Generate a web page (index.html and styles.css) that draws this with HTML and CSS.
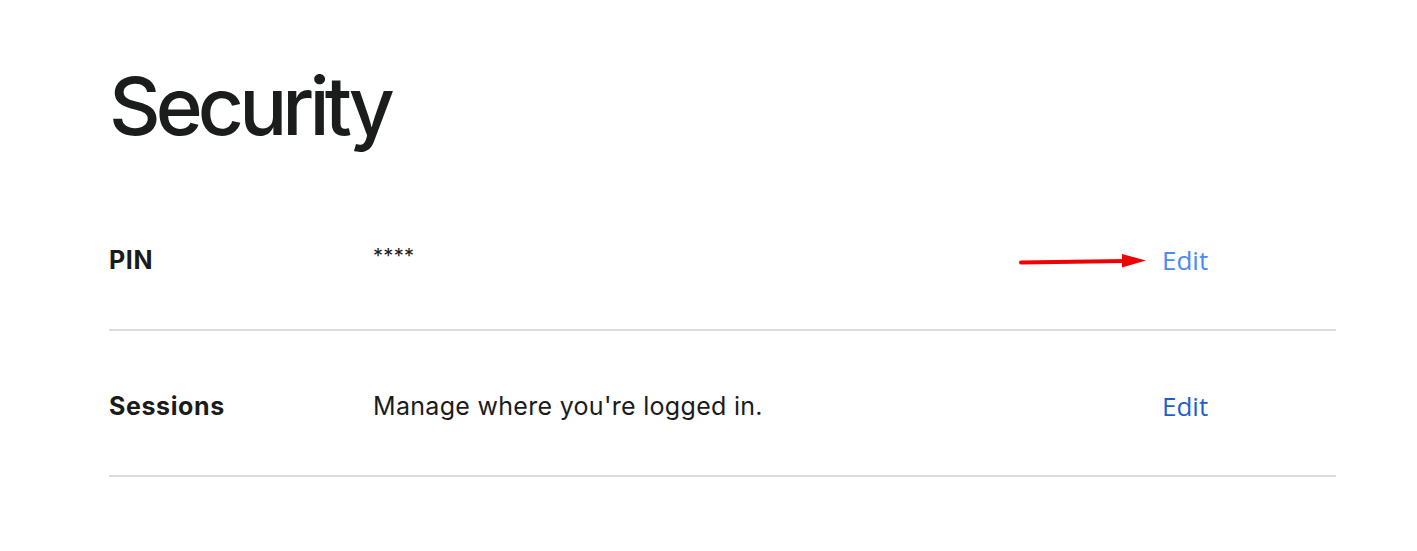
FILE: index.html
```html
<!DOCTYPE html>
<html lang="en">
<head>
<meta charset="utf-8">
<title>Security</title>
<link rel="stylesheet" href="styles.css">
</head>
<body>
<main class="page">
  <h1 class="title">Security</h1>
  <section class="settings">
    <div class="row">
      <div class="label">PIN</div>
      <div class="value value-pin">****</div>
      <div class="action">
        <a class="edit edit-hover" href="#">Edit</a>
        <svg class="arrow" width="130" height="20" viewBox="0 0 130 20" aria-hidden="true">
          <path d="M3 11.5 L108 10" stroke="#f00000" stroke-width="4" stroke-linecap="round" fill="none"/>
          <polygon points="104,3 128,9.5 104,16.5" fill="#f00000"/>
        </svg>
      </div>
    </div>
    <div class="row">
      <div class="label">Sessions</div>
      <div class="value">Manage where you're logged in.</div>
      <div class="action">
        <a class="edit" href="#">Edit</a>
      </div>
    </div>
  </section>
</main>
</body>
</html>
```

FILE: styles.css
```css
* { box-sizing: border-box; }
html, body { margin: 0; padding: 0; background: #ffffff; }
body {
  font-family: Inter, "Liberation Sans", Arial, sans-serif;
  color: #1b1b1b;
}
.page {
  padding: 58px 81px 0 109px;
}
.title {
  margin: 0;
  font-size: 80px;
  font-weight: 500;
  line-height: 96px;
  letter-spacing: -4.9px;
  color: #1b1c1c;
}
.settings {
  margin-top: 31px;
}
.row {
  display: grid;
  grid-template-columns: 264px 1fr 174px;
  align-items: center;
  height: 146px;
  padding-top: 6px;
  border-bottom: 2px solid #dcdcdc;
}
.label {
  font-size: 25px;
  font-weight: 700;
  letter-spacing: 0.6px;
}
.value {
  font-size: 25px;
  font-weight: 400;
  letter-spacing: 0.3px;
}
.value-pin {
  font-size: 20px;
  position: relative;
  top: -4px;
}
.action {
  position: relative;
}
.edit {
  font-family: "Open Sans", "Liberation Sans", sans-serif;
  font-size: 26px;
  color: #1f5fcc;
  text-decoration: none;
}
.edit-hover {
  color: #4a8af4;
}
.arrow {
  position: absolute;
  left: -144px;
  top: 50%;
  margin-top: -9px;
}
```
